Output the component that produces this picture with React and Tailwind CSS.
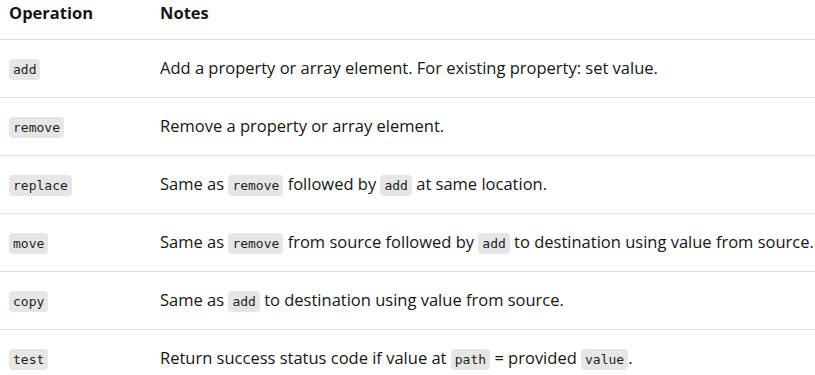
const rows = [
  { op: "add", notes: ["Add a property or array element. For existing property: set value."] },
  { op: "remove", notes: ["Remove a property or array element."] },
  { op: "replace", notes: ["Same as ", { c: "remove" }, " followed by ", { c: "add" }, " at same location."] },
  { op: "move", notes: ["Same as ", { c: "remove" }, " from source followed by ", { c: "add" }, " to destination using value from source."] },
  { op: "copy", notes: ["Same as ", { c: "add" }, " to destination using value from source."] },
  { op: "test", notes: ["Return success status code if value at ", { c: "path" }, " = provided ", { c: "value" }, "."] },
];

function Code({ children }) {
  return (
    <code className="rounded-[4px] bg-[#e6e6e6] px-[4px] py-[3px] font-['DejaVu_Sans_Mono',monospace] text-[13px] text-[#1e1e1e]">
      {children}
    </code>
  );
}

export default function App() {
  return (
    <div className="h-[375px] w-[815px] overflow-hidden bg-white font-['Open_Sans',sans-serif] text-[16.5px] text-[#161616]">
      {/* header */}
      <div className="flex h-[39px] items-start pt-[1px] text-[16.5px] font-bold">
        <div className="w-[160px] pl-[9px]">Operation</div>
        <div>Notes</div>
      </div>

      {rows.map((r) => (
        <div key={r.op} className="flex h-[58px] items-center border-t border-[#e0e0e0]">
          <div className="w-[160px] pl-[9px]">
            <Code>{r.op}</Code>
          </div>
          <div className="whitespace-nowrap">
            {r.notes.map((n, i) =>
              typeof n === "string" ? <span key={i}>{n}</span> : <Code key={i}>{n.c}</Code>
            )}
          </div>
        </div>
      ))}
    </div>
  );
}
